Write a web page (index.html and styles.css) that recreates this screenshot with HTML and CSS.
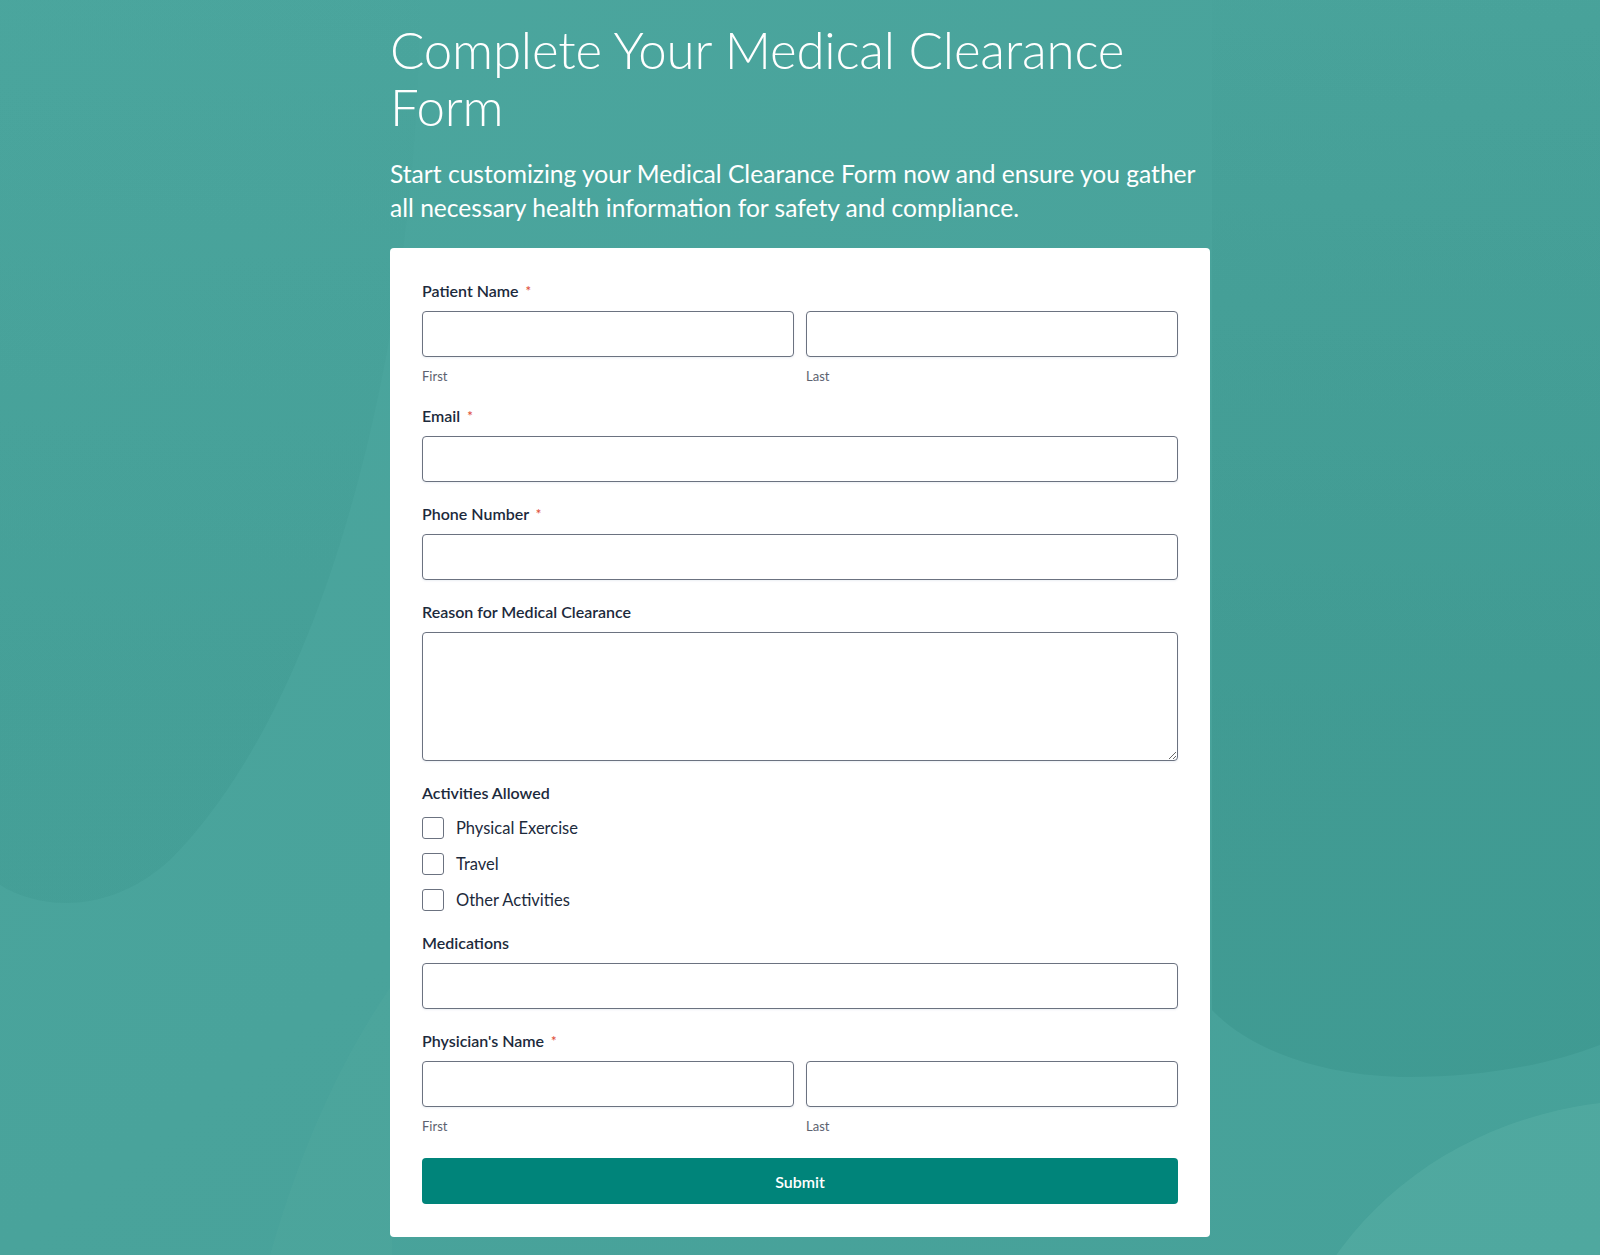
FILE: index.html
```html
<!DOCTYPE html>
<html lang="en">
<head>
<meta charset="utf-8">
<title>Medical Clearance Form</title>
<link rel="stylesheet" href="styles.css">
</head>
<body>
<main class="page">
  <header class="intro">
    <h1 class="title">Complete Your Medical Clearance Form</h1>
    <p class="subtitle">Start customizing your Medical Clearance Form now and ensure you gather all necessary health information for safety and compliance.</p>
  </header>
  <form class="card">
    <div class="field">
      <div class="label">Patient Name <span class="req">*</span></div>
      <div class="pair">
        <div class="sub"><input class="input" type="text"><span class="sublabel">First</span></div>
        <div class="sub"><input class="input" type="text"><span class="sublabel">Last</span></div>
      </div>
    </div>
    <div class="field">
      <div class="label">Email <span class="req">*</span></div>
      <input class="input" type="text">
    </div>
    <div class="field">
      <div class="label">Phone Number <span class="req">*</span></div>
      <input class="input" type="text">
    </div>
    <div class="field">
      <div class="label">Reason for Medical Clearance</div>
      <textarea class="input textarea"></textarea>
    </div>
    <div class="field">
      <div class="label">Activities Allowed</div>
      <div class="checks">
        <label class="check"><span class="box"></span>Physical Exercise</label>
        <label class="check"><span class="box"></span>Travel</label>
        <label class="check"><span class="box"></span>Other Activities</label>
      </div>
    </div>
    <div class="field">
      <div class="label">Medications</div>
      <input class="input" type="text">
    </div>
    <div class="field">
      <div class="label">Physician's Name <span class="req">*</span></div>
      <div class="pair">
        <div class="sub"><input class="input" type="text"><span class="sublabel">First</span></div>
        <div class="sub"><input class="input" type="text"><span class="sublabel">Last</span></div>
      </div>
    </div>
    <button class="submit" type="button">Submit</button>
  </form>
</main>
</body>
</html>
```

FILE: styles.css
```css
* { box-sizing: border-box; }
html, body { margin: 0; padding: 0; }
body {
  min-height: 1255px;
  font-family: Lato, "Noto Sans", sans-serif;
  color: #1c2a3c;
  background-color: #49a39b;
  background-repeat: no-repeat;
  background-size: 1600px 1255px;
  background-image: url("data:image/svg+xml,%3Csvg xmlns='http://www.w3.org/2000/svg' width='1600' height='1255' viewBox='0 0 1600 1255'%3E%3Cdefs%3E%3ClinearGradient id='g' x1='0' y1='0' x2='1' y2='1'%3E%3Cstop offset='0' stop-color='%234ba69e'/%3E%3Cstop offset='0.5' stop-color='%2349a39b'/%3E%3Cstop offset='1' stop-color='%2346a199'/%3E%3C/linearGradient%3E%3ClinearGradient id='fl' gradientUnits='userSpaceOnUse' x1='0' y1='0' x2='0' y2='700'%3E%3Cstop offset='0' stop-color='%23308a82' stop-opacity='0.02'/%3E%3Cstop offset='1' stop-color='%23308a82' stop-opacity='0.18'/%3E%3C/linearGradient%3E%3ClinearGradient id='fr' gradientUnits='userSpaceOnUse' x1='0' y1='0' x2='0' y2='700'%3E%3Cstop offset='0' stop-color='%23308a82' stop-opacity='0.03'/%3E%3Cstop offset='0.35' stop-color='%23308a82' stop-opacity='0.14'/%3E%3Cstop offset='1' stop-color='%23308a82' stop-opacity='0.3'/%3E%3C/linearGradient%3E%3C/defs%3E%3Crect width='1600' height='1255' fill='url(%23g)'/%3E%3Cpath d='M0,0 L420,0 C420,300 340,690 170,860 C110,915 40,910 0,885 Z' fill='url(%23fl)'/%3E%3Cpath d='M1212,0 L1600,0 L1600,1045 C1540,1068 1470,1078 1400,1077 C1320,1075 1250,1050 1212,1010 Z' fill='url(%23fr)'/%3E%3Cellipse cx='1650' cy='1430' rx='370' ry='330' fill='%2370c2b8' fill-opacity='0.22'/%3E%3Cpath d='M270,1255 C300,1150 340,1060 392,985 L392,1255 Z' fill='%2370c2b8' fill-opacity='0.08'/%3E%3C/svg%3E");
}
.page {
  width: 820px;
  margin: 0 auto;
  padding-top: 21px;
  padding-bottom: 18px;
}
.title {
  margin: 0;
  font-size: 51px;
  line-height: 57px;
  font-weight: 300;
  color: #ffffff;
  letter-spacing: -0.2px;
}
.subtitle {
  margin: 22px 0 0;
  font-size: 24.6px;
  line-height: 34px;
  font-weight: 400;
  color: #ffffff;
}
.card {
  margin-top: 23px;
  background: #ffffff;
  border-radius: 4px;
  padding: 33px 32px 33px;
  display: flex;
  flex-direction: column;
  gap: 22px;
}
.field { display: flex; flex-direction: column; }
.label {
  font-size: 16px;
  line-height: 20px;
  font-weight: 600;
  color: #1c2a3c;
  margin-bottom: 10px;
}
.req {
  color: #e0523c;
  font-size: 13px;
  margin-left: 3px;
  vertical-align: 1px;
}
.pair {
  display: grid;
  grid-template-columns: 1fr 1fr;
  gap: 12px;
}
.sub { display: flex; flex-direction: column; }
.input {
  display: block;
  width: 100%;
  height: 46px;
  border: 1px solid #6b7280;
  border-radius: 4px;
  background: #fff;
  box-shadow: 0 1px 2px rgba(100,120,160,0.12);
  font: inherit;
  margin: 0;
}
.textarea {
  height: 129px;
  resize: vertical;
}
.sublabel {
  margin-top: 11px;
  font-size: 13px;
  line-height: 16px;
  color: #5c6270;
}
.checks {
  display: flex;
  flex-direction: column;
  gap: 14px;
  margin-top: 4px;
}
.check {
  display: flex;
  align-items: center;
  gap: 12px;
  font-size: 16.5px;
  line-height: 22px;
  color: #1c2a3c;
}
.box {
  width: 22px;
  height: 22px;
  border: 1px solid #6b7280;
  border-radius: 3px;
  background: #fff;
  flex: none;
}
.submit {
  margin-top: 2px;
  height: 46px;
  border: none;
  border-radius: 4px;
  background: #00847a;
  color: #ffffff;
  font-family: Lato, "Noto Sans", sans-serif;
  font-size: 16px;
  font-weight: 600;
}
```
